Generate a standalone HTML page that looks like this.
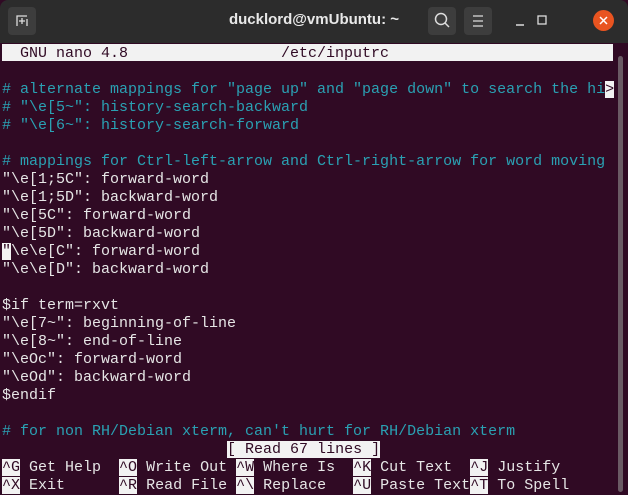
<!DOCTYPE html>
<html><head><style>
html,body{margin:0;width:628px;height:495px;overflow:hidden}
body{background:#300a24;position:relative;font-family:"Liberation Sans",sans-serif}
#tb{position:absolute;left:0;top:0;width:628px;height:43px;background:#2c2c2c;border-radius:8px 8px 0 0}
.btn{position:absolute;top:7px;width:28px;height:28px;background:#3d3d3d;border-radius:4px}
#title{position:absolute;left:0;width:628px;top:11px;text-align:center;color:#e8e8e8;font-weight:bold;font-size:15px}
#term{position:absolute;left:0;top:43px;width:628px;height:452px;background:#300a24;overflow:hidden}
pre{margin:0;position:absolute;left:2px;top:2px;font-family:"Liberation Mono",monospace;font-size:15px;line-height:18px;color:#e6e6e6;letter-spacing:0}
.c{color:#2aa1b3}
.i{background:#f2f2f2;color:#300a24}
#sb{position:absolute;left:618px;top:13px;width:5px;height:436px;background:#6a5a64;border-radius:3px}
</style></head><body>
<div id="tb">
<div class="btn" style="left:8px"><svg width="28" height="28"><path d="M9 19V9h10M19 12v7" fill="none" stroke="#ddd" stroke-width="1.3"/><path d="M14 11v6M11 14h6" stroke="#ddd" stroke-width="1.3"/></svg></div>
<div id="title">ducklord@vmUbuntu: ~</div>
<div class="btn" style="left:428px"><svg width="28" height="28"><circle cx="13" cy="12" r="5.5" fill="none" stroke="#ddd" stroke-width="1.5"/><path d="M17 16l4 4" stroke="#ddd" stroke-width="1.5"/></svg></div>
<div class="btn" style="left:464px"><svg width="28" height="28"><path d="M9 9h10M9 14h10M9 19h10" stroke="#ddd" stroke-width="1.3"/></svg></div>
<svg style="position:absolute;left:510px;top:10px" width="40" height="22"><path d="M6 15h8" stroke="#ddd" stroke-width="1.5"/><rect x="28" y="6" width="8" height="8" fill="none" stroke="#ddd" stroke-width="1.3"/></svg>
<div style="position:absolute;left:593px;top:10px;width:21px;height:21px;border-radius:50%;background:#e95420"><svg width="21" height="21"><path d="M7 7l7 7M14 7l-7 7" stroke="#fff" stroke-width="1.5"/></svg></div>
</div>
<div id="term">
<div style="position:absolute;left:2px;top:1px;width:611px;height:17px;background:#f2f2f2"></div>
<div id="sb"></div>
<pre><span style="color:#300a24">  GNU nano 4.8                 /etc/inputrc</span>

<span class="c"># alternate mappings for "page up" and "page down" to search the hi</span><span class="i">&gt;</span>
<span class="c"># "\e[5~": history-search-backward</span>
<span class="c"># "\e[6~": history-search-forward</span>

<span class="c"># mappings for Ctrl-left-arrow and Ctrl-right-arrow for word moving</span>
"\e[1;5C": forward-word
"\e[1;5D": backward-word
"\e[5C": forward-word
"\e[5D": backward-word
<span class="i">"</span>\e\e[C": forward-word
"\e\e[D": backward-word

$if term=rxvt
"\e[7~": beginning-of-line
"\e[8~": end-of-line
"\eOc": forward-word
"\eOd": backward-word
$endif

<span class="c"># for non RH/Debian xterm, can't hurt for RH/Debian xterm</span>
                         <span class="i">[ Read 67 lines ]</span>
<span class="i">^G</span> Get Help  <span class="i">^O</span> Write Out <span class="i">^W</span> Where Is  <span class="i">^K</span> Cut Text  <span class="i">^J</span> Justify
<span class="i">^X</span> Exit      <span class="i">^R</span> Read File <span class="i">^\</span> Replace   <span class="i">^U</span> Paste Text<span class="i">^T</span> To Spell</pre>
</div>
</body></html>
